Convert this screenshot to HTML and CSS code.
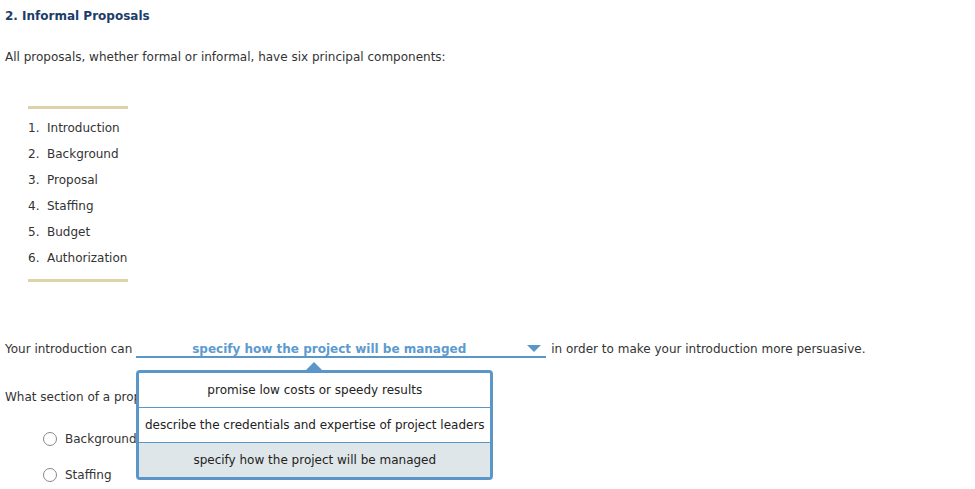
FILE: index.html
```html
<!DOCTYPE html>
<html>
<head>
  <meta charset="UTF-8">
  <link rel="stylesheet" href="styles.css">
</head>
<body>
  <div class="page">
    <h2 class="title">2. Informal Proposals</h2>
    <p class="intro">All proposals, whether formal or informal, have six principal components:</p>

    <div class="parts">
      <ol>
        <li>Introduction</li>
        <li>Background</li>
        <li>Proposal</li>
        <li>Staffing</li>
        <li>Budget</li>
        <li>Authorization</li>
      </ol>
    </div>

    <div class="question q1">
      <span>Your introduction can</span>
      <span class="select">
        <span class="chosen">specify how the project will be managed</span>
        <span class="arrow"></span>
        <div class="menu">
          <div class="opt">promise low costs or speedy results</div>
          <div class="opt">describe the credentials and expertise of project leaders</div>
          <div class="opt picked">specify how the project will be managed</div>
        </div>
      </span>
      <span>in order to make your introduction more persuasive.</span>
    </div>

    <div class="question q2">What section of a proposal describes the people who will work on the project?</div>

    <div class="choices">
      <label class="choice"><span class="radio"></span>Background</label>
      <label class="choice"><span class="radio"></span>Staffing</label>
    </div>
  </div>
</body>
</html>
```

FILE: styles.css
```css
body {
  margin: 0;
  background: #fff;
  color: #333;
  font-family: "DejaVu Sans", Verdana, sans-serif;
  font-size: 12px;
}
.page {
  padding: 0 5px;
}
h2.title {
  margin: 0;
  padding-top: 8px;
  height: 16px;
  line-height: 16px;
  font-size: 12px;
  font-weight: bold;
  color: #1c3d68;
}
p.intro {
  margin: 25px 0 0 0;
  line-height: 16px;
}
div.parts {
  margin: 41px 0 0 23px;
  width: 100px;
  border-top: 3px solid #dcd3a8;
  border-bottom: 3px solid #dcd3a8;
  padding: 6px 0 8px 0;
}
div.parts ol {
  margin: 0;
  padding: 0;
  list-style: none;
  counter-reset: n;
}
div.parts li {
  counter-increment: n;
  height: 26px;
  line-height: 26px;
  white-space: nowrap;
}
div.parts li::before {
  content: counter(n) ". ";
  display: inline-block;
  width: 19px;
}
div.question {
  line-height: 16px;
}
div.q1 {
  margin-top: 59px;
  display: flex;
  align-items: flex-start;
}
span.select {
  position: relative;
  display: inline-block;
  width: 410px;
  height: 15px;
  margin: 0 5px 0 4px;
  border-bottom: 2px solid #5b96c8;
}
span.chosen {
  display: block;
  width: 386px;
  text-align: center;
  font-weight: bold;
  color: #5b9bd0;
}
span.arrow {
  position: absolute;
  right: 5px;
  top: 4px;
  border-left: 7px solid transparent;
  border-right: 7px solid transparent;
  border-top: 7px solid #5b96c8;
}
div.menu {
  position: absolute;
  left: 0;
  top: 29px;
  width: 351px;
  background: #fff;
  border: 3px solid #5b96c8;
  border-radius: 4px;
  z-index: 2;
}
div.menu::before {
  content: "";
  position: absolute;
  left: 167px;
  top: -11px;
  border-left: 8px solid transparent;
  border-right: 8px solid transparent;
  border-bottom: 8px solid #5b96c8;
}
div.opt {
  height: 34px;
  line-height: 34px;
  text-align: center;
  color: #222;
  white-space: nowrap;
  border-top: 1px solid #5b96c8;
}
div.opt:first-child {
  border-top: none;
}
div.opt.picked {
  background: #dfe6e9;
}
div.q2 {
  margin-top: 31px;
}
div.choices {
  margin: 16px 0 0 38px;
}
label.choice {
  display: flex;
  align-items: center;
  height: 36px;
}
span.radio {
  width: 12px;
  height: 12px;
  border: 1px solid #888;
  border-radius: 50%;
  margin-right: 8px;
}
```
